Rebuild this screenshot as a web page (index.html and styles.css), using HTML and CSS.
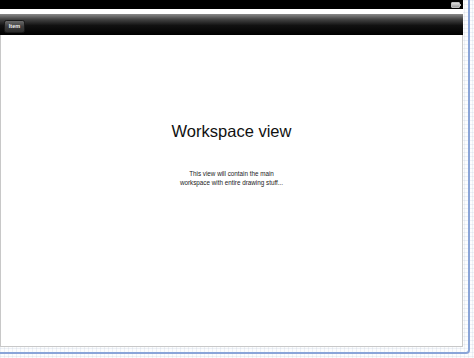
FILE: index.html
```html
<!DOCTYPE html>
<html>
<head>
<meta charset="utf-8">
<link rel="stylesheet" href="styles.css">
</head>
<body>
<div class="canvas">
  <div class="device">
    <div class="statusbar">
      <div class="battery"><span class="cell"></span><span class="tip"></span></div>
    </div>
    <div class="gap"></div>
    <div class="navbar">
      <div class="btn">Item</div>
    </div>
    <div class="content">
      <div class="title">Workspace view</div>
      <div class="desc">This view will contain the main<br>workspace with entire drawing stuff...</div>
    </div>
  </div>
  <div class="frame"></div>
</div>
</body>
</html>
```
FILE: styles.css
```css
html, body {
  margin: 0;
  padding: 0;
}
body {
  width: 474px;
  height: 358px;
  overflow: hidden;
  font-family: "Liberation Sans", Arial, sans-serif;
  background-color: #fcfdfe;
  background-image:
    linear-gradient(to right, rgba(205, 212, 228, 0.3) 1px, transparent 1px),
    linear-gradient(to bottom, rgba(205, 212, 228, 0.3) 1px, transparent 1px);
  background-size: 4px 4px;
}
.canvas {
  position: relative;
  width: 474px;
  height: 358px;
  overflow: hidden;
}
.device {
  width: 463px;
  height: 347px;
  display: flex;
  flex-direction: column;
}
.statusbar {
  height: 9px;
  background: #000;
  display: flex;
  justify-content: flex-end;
  align-items: center;
  padding-right: 2px;
}
.battery {
  display: flex;
  align-items: center;
}
.cell {
  width: 7px;
  height: 4px;
  border: 0.5px solid #bbb;
  background: linear-gradient(#ddd, #999);
  border-radius: 1px;
}
.tip {
  width: 1px;
  height: 2px;
  background: #aaa;
}
.gap {
  height: 5px;
  background: #fff;
}
.navbar {
  height: 21px;
  background: linear-gradient(to bottom, #8a8a8a 0%, #444 25%, #111 55%, #000 100%);
  display: flex;
  align-items: center;
  padding-left: 4px;
}
.btn {
  width: 21px;
  height: 13px;
  box-sizing: border-box;
  border: 1px solid #1a1a1a;
  border-radius: 2.5px;
  background: linear-gradient(to bottom, #6a6a6a 0%, #3e3e3e 50%, #2b2b2b 100%);
  color: #eee;
  font-size: 5.5px;
  font-weight: bold;
  display: flex;
  align-items: center;
  justify-content: center;
  margin-top: 3px;
}
.content {
  flex: 1;
  background: #fff;
  border-left: 1px solid #c8c8c8;
  border-right: 1px solid #c8c8c8;
  border-bottom: 1px solid #c8c8c8;
  display: flex;
  flex-direction: column;
  align-items: center;
  padding-top: 86px;
}
.title {
  font-size: 16.5px;
  line-height: 21px;
  color: #111;
}
.desc {
  margin-top: 27px;
  font-size: 6.3px;
  line-height: 9px;
  text-align: center;
  color: #222;
}
.frame {
  position: absolute;
  left: -20px;
  top: -20px;
  width: 490px;
  height: 374px;
  border: 2px solid #8aa5d8;
  border-radius: 4px;
  box-sizing: border-box;
  pointer-events: none;
}
```
